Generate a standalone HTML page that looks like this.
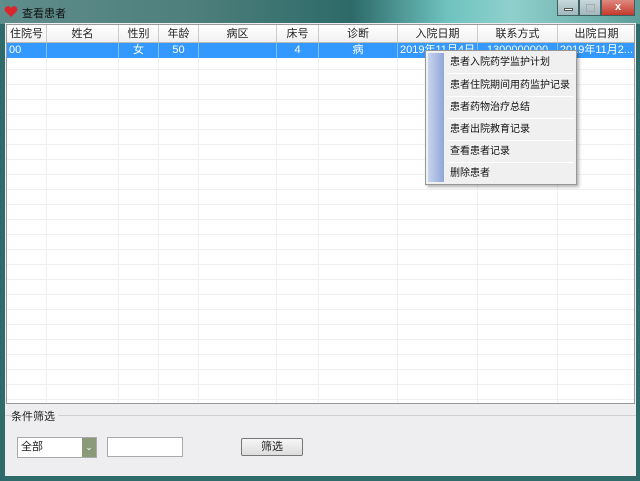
<!DOCTYPE html>
<html><head><meta charset="utf-8"><style>
*{margin:0;padding:0;box-sizing:border-box}
body{width:640px;height:481px;overflow:hidden;position:relative;background:#2f6b6a;font-family:"Liberation Sans","Noto Sans CJK SC",sans-serif;font-size:11px;color:#222}
.title{position:absolute;left:0;top:0;width:640px;height:24px;background:linear-gradient(90deg,#5f8d8c 0%,#4e7f7c 30%,#2d6a68 55%,#6fc3c0 70%,#8fd0cc 80%,#5f9f9a 100%)}
.title span{position:absolute;left:22px;top:5px;font-size:11px;color:#111}
.btn{position:absolute;top:0;height:16px;border:1px solid #3f6060;border-top:none}
.client{position:absolute;left:5px;top:23px;width:631px;height:453px;background:#eeedef}
.grid{position:absolute;left:1px;top:1px;width:629px;height:380px;background:#fff;border:1px solid #999;overflow:hidden;
background-image:repeating-linear-gradient(180deg,transparent 0,transparent 14px,#f0f0f0 14px,#f0f0f0 15px)}
.hdr{position:absolute;left:0;top:0;height:18px;background:linear-gradient(#fff,#f1f1f1);border-right:1px solid #ccc;border-bottom:1px solid #bbb;text-align:center;line-height:18px;font-size:11px}
.vl{position:absolute;top:18px;bottom:0;width:1px;background:#f0f0f0}
.sel{position:absolute;left:0;top:18px;height:15px;background:#3399ff;color:#fff;text-align:center;line-height:15px;font-size:11px;border-right:1px solid #7fbfff}
.menu{position:absolute;left:425px;top:50px;width:152px;height:135px;background:#f0f0f0;border:1px solid #979797;box-shadow:2px 2px 3px rgba(0,0,0,.3)}
.strip{position:absolute;left:2px;top:2px;width:16px;bottom:2px;background:linear-gradient(90deg,#c6d4ee,#8fa7d8)}
.mi{position:absolute;left:24px;height:22px;line-height:22px;font-size:10px;color:#111}
.sep{position:absolute;left:21px;right:2px;height:1px;background:#bbb;border-bottom:1px solid #fff}
</style></head><body>
<div class="title">
<svg style="position:absolute;left:4px;top:6px" width="14" height="12" viewBox="0 0 14 12"><path d="M7 11 L1 5 A3 3 0 0 1 7 2 A3 3 0 0 1 13 5 Z" fill="#d8262d"/></svg>
<span>查看患者</span>
<div class="btn" style="left:557px;width:22px;background:linear-gradient(#c8d8dc,#9fb7bd)"><div style="position:absolute;left:6px;top:8px;width:9px;height:3px;background:#fff;border:1px solid #555"></div></div>
<div class="btn" style="left:579px;width:22px;background:linear-gradient(#c8d8dc,#9fb7bd)"><div style="position:absolute;left:6px;top:4px;width:9px;height:8px;border:1px solid #aaa"></div></div>
<div class="btn" style="left:601px;width:34px;background:linear-gradient(#e08a80,#c4392c)"><span style="left:13px;top:1px;color:#fff;font-weight:bold">x</span></div>
</div>
<div class="client">
<div class="grid">
<div class="hdr" style="left:0;width:40px">住院号</div>
<div class="hdr" style="left:40px;width:72px">姓名</div>
<div class="hdr" style="left:112px;width:40px">性别</div>
<div class="hdr" style="left:152px;width:40px">年龄</div>
<div class="hdr" style="left:192px;width:78px">病区</div>
<div class="hdr" style="left:270px;width:42px">床号</div>
<div class="hdr" style="left:312px;width:79px">诊断</div>
<div class="hdr" style="left:391px;width:80px">入院日期</div>
<div class="hdr" style="left:471px;width:80px">联系方式</div>
<div class="hdr" style="left:551px;width:78px">出院日期</div>
<div class="vl" style="left:39px"></div><div class="vl" style="left:111px"></div><div class="vl" style="left:151px"></div><div class="vl" style="left:191px"></div><div class="vl" style="left:269px"></div><div class="vl" style="left:311px"></div><div class="vl" style="left:390px"></div><div class="vl" style="left:470px"></div><div class="vl" style="left:550px"></div>
<div class="sel" style="left:0;width:40px;text-align:left;padding-left:2px">00</div>
<div class="sel" style="left:40px;width:72px"></div>
<div class="sel" style="left:112px;width:40px">女</div>
<div class="sel" style="left:152px;width:40px">50</div>
<div class="sel" style="left:192px;width:78px"></div>
<div class="sel" style="left:270px;width:42px">4</div>
<div class="sel" style="left:312px;width:79px">病</div>
<div class="sel" style="left:391px;width:80px">2019年11月4日</div>
<div class="sel" style="left:471px;width:80px">1300000000</div>
<div class="sel" style="left:551px;width:78px">2019年11月2...</div>
</div>
<div style="position:absolute;left:0;top:392px;width:631px;height:1px;background:#d0d0d0"></div>
<div style="position:absolute;left:6px;top:385px;font-size:11px;background:#eeedef;padding-right:3px">条件筛选</div>
<div style="position:absolute;left:12px;top:414px;width:80px;height:21px;background:#fff;border:1px solid #aaa;line-height:19px;padding-left:3px">全部</div>
<div style="position:absolute;left:77px;top:415px;width:14px;height:19px;background:#8a9a78;color:#fff;text-align:center;line-height:19px;font-size:9px">⌄</div>
<div style="position:absolute;left:102px;top:414px;width:76px;height:20px;background:#fff;border:1px solid #aaa"></div>
<div style="position:absolute;left:236px;top:415px;width:62px;height:18px;background:linear-gradient(#f6f6f6,#ddd);border:1px solid #777;border-radius:2px;text-align:center;line-height:16px">筛选</div>
</div>
<div class="menu">
<div class="strip"></div>
<div class="mi" style="top:1px">患者入院药学监护计划</div>
<div class="sep" style="top:22px"></div>
<div class="mi" style="top:24px">患者住院期间用药监护记录</div>
<div class="sep" style="top:45px"></div>
<div class="mi" style="top:46px">患者药物治疗总结</div>
<div class="sep" style="top:67px"></div>
<div class="mi" style="top:68px">患者出院教育记录</div>
<div class="sep" style="top:89px"></div>
<div class="mi" style="top:90px">查看患者记录</div>
<div class="sep" style="top:111px"></div>
<div class="mi" style="top:112px">删除患者</div>
</div>
</body></html>
